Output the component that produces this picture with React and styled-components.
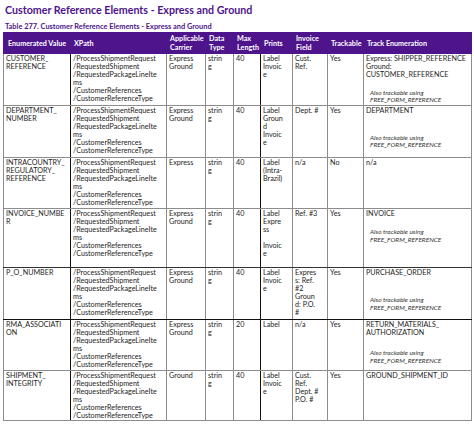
import React from 'react';
import styled, { createGlobalStyle } from 'styled-components';

const Global = createGlobalStyle`
  html, body { margin: 0; padding: 0; background: #fff; }
  body { font-family: Lato, "Liberation Sans", sans-serif; }
`;

const Page = styled.div`
  width: 474px;
  height: 424px;
  overflow: hidden;
  box-sizing: border-box;
  padding: 3px 0 0 3px;
`;

const Title = styled.h1`
  margin: 0 0 0 2px;
  font-size: 10.7px;
  line-height: 14px;
  font-weight: 700;
  color: #4d148c;
  white-space: nowrap;
`;

const Caption = styled.div`
  margin: 5px 0 1px 2px;
  font-size: 7.4px;
  line-height: 9px;
  font-weight: 700;
  color: #4d148c;
  white-space: nowrap;
`;

const Table = styled.table`
  border-collapse: collapse;
  table-layout: fixed;
  width: 468px;
`;

const HeadCell = styled.th`
  background: #4d148c;
  color: #fff;
  font-weight: 700;
  font-size: 7.2px;
  line-height: 9px;
  text-align: left;
  vertical-align: middle;
  height: 21px;
  padding: 0 1px 0 ${(p) => p.$pl || 3}px;
  border: 1px solid #4d148c;
  box-sizing: border-box;
`;

const Row = styled.tr`
  height: ${(p) => p.$h}px;
`;

const Cell = styled.td`
  vertical-align: top;
  padding: 0.5px 2px 0;
  font-size: 7.2px;
  line-height: 8.1px;
  color: #1e1e1e;
  border: 1px solid #8c8c8c;
  border-right: ${(p) => (p.$darkRight ? '1.5px solid #111' : '1px solid #8c8c8c')};
  border-bottom: ${(p) => (p.$darkBottom ? `1.5px solid ${p.$darkBottom}` : '1px solid #8c8c8c')};
  overflow: hidden;
`;

const Line = styled.div`
  white-space: nowrap;
`;

const Note = styled.div`
  margin-top: ${(p) => p.$mt}px;
  padding-left: 4px;
  font-style: italic;
  font-size: 6.5px;
  line-height: 7.7px;
  color: #333;
  white-space: nowrap;
`;

const cols = [67, 96, 39, 28, 27, 32, 35, 36, 108];

const headers = [
  ['Enumerated Value'],
  ['XPath'],
  ['Applicable', 'Carrier'],
  ['Data', 'Type'],
  ['Max', 'Length'],
  ['Prints'],
  ['Invoice', 'Field'],
  ['Trackable'],
  ['Track Enumeration'],
];

const xpath = [
  '/ProcessShipmentRequest',
  '/RequestedShipment',
  '/RequestedPackageLineIte',
  'ms',
  '/CustomerReferences',
  '/CustomerReferenceType',
];

const rows = [
  {
    h: 52,
    enumv: ['CUSTOMER_', 'REFERENCE'],
    carrier: ['Express', 'Ground'],
    max: '40',
    prints: ['Label', 'Invoic', 'e'],
    invoice: ['Cust.', 'Ref.'],
    track: 'Yes',
    en: ['Express: SHIPPER_REFERENCE', 'Ground:', 'CUSTOMER_REFERENCE'],
    note: 10,
  },
  {
    h: 52,
    enumv: ['DEPARTMENT_', 'NUMBER'],
    carrier: ['Express', 'Ground'],
    max: '40',
    prints: ['Label', 'Groun', 'd', 'Invoic', 'e'],
    invoice: ['Dept. #'],
    track: 'Yes',
    en: ['DEPARTMENT'],
    note: 19,
  },
  {
    h: 51,
    enumv: ['INTRACOUNTRY_', 'REGULATORY_', 'REFERENCE'],
    carrier: ['Express'],
    max: '40',
    prints: ['Label', '(Intra-', 'Brazil)'],
    invoice: ['n/a'],
    track: 'No',
    en: ['n/a'],
  },
  {
    h: 59,
    enumv: ['INVOICE_NUMBE', 'R'],
    carrier: ['Express', 'Ground'],
    max: '40',
    prints: ['Label', 'Expre', 'ss', '', 'Invoic', 'e'],
    invoice: ['Ref. #3'],
    track: 'Yes',
    en: ['INVOICE'],
    note: 10.5,
    dark: '#333',
  },
  {
    h: 52,
    enumv: ['P_O_NUMBER'],
    carrier: ['Express', 'Ground'],
    max: '40',
    prints: ['Label', 'Invoic', 'e'],
    invoice: ['Expres', 's: Ref.', '#2', 'Groun', 'd: P.O.', '#'],
    track: 'Yes',
    en: ['PURCHASE_ORDER'],
    note: 19.5,
    dark: '#111',
  },
  {
    h: 51,
    enumv: ['RMA_ASSOCIATI', 'ON'],
    carrier: ['Express', 'Ground'],
    max: '20',
    prints: ['Label'],
    invoice: ['n/a'],
    track: 'Yes',
    en: ['RETURN_MATERIALS_', 'AUTHORIZATION'],
    note: 12.5,
  },
  {
    h: 50,
    enumv: ['SHIPMENT_', 'INTEGRITY'],
    carrier: ['Ground'],
    max: '40',
    prints: ['Label', 'Invoic', 'e'],
    invoice: ['Cust.', 'Ref.', 'Dept. #', 'P.O. #'],
    track: 'Yes',
    en: ['GROUND_SHIPMENT_ID'],
  },
];

const Lines = ({ items }) =>
  items.map((t, i) => <Line key={i}>{t === '' ? '\u00a0' : t}</Line>);

export default function App() {
  return (
    <Page>
      <Global />
      <Title>Customer Reference Elements - Express and Ground</Title>
      <Caption>Table 277. Customer Reference Elements - Express and Ground</Caption>
      <Table>
        <colgroup>
          {cols.map((w, i) => (
            <col key={i} style={{ width: w }} />
          ))}
        </colgroup>
        <thead>
          <tr>
            {headers.map((h, i) => (
              <HeadCell key={i} $pl={i === 0 ? 4 : 3}>
                <Lines items={h} />
              </HeadCell>
            ))}
          </tr>
        </thead>
        <tbody>
          {rows.map((r, i) => (
            <Row key={i} $h={r.h}>
              <Cell $darkRight $darkBottom={r.dark}><Lines items={r.enumv} /></Cell>
              <Cell $darkBottom={r.dark}><Lines items={xpath} /></Cell>
              <Cell $darkBottom={r.dark}><Lines items={r.carrier} /></Cell>
              <Cell $darkBottom={r.dark}><Lines items={['strin', 'g']} /></Cell>
              <Cell $darkRight $darkBottom={r.dark}><Line>{r.max}</Line></Cell>
              <Cell $darkBottom={r.dark}><Lines items={r.prints} /></Cell>
              <Cell $darkBottom={r.dark}><Lines items={r.invoice} /></Cell>
              <Cell $darkBottom={r.dark}><Line>{r.track}</Line></Cell>
              <Cell $darkBottom={r.dark}>
                <Lines items={r.en} />
                {r.note !== undefined && (
                  <Note $mt={r.note}>
                    <div>Also trackable using</div>
                    <div>FREE_FORM_REFERENCE</div>
                  </Note>
                )}
              </Cell>
            </Row>
          ))}
        </tbody>
      </Table>
    </Page>
  );
}
